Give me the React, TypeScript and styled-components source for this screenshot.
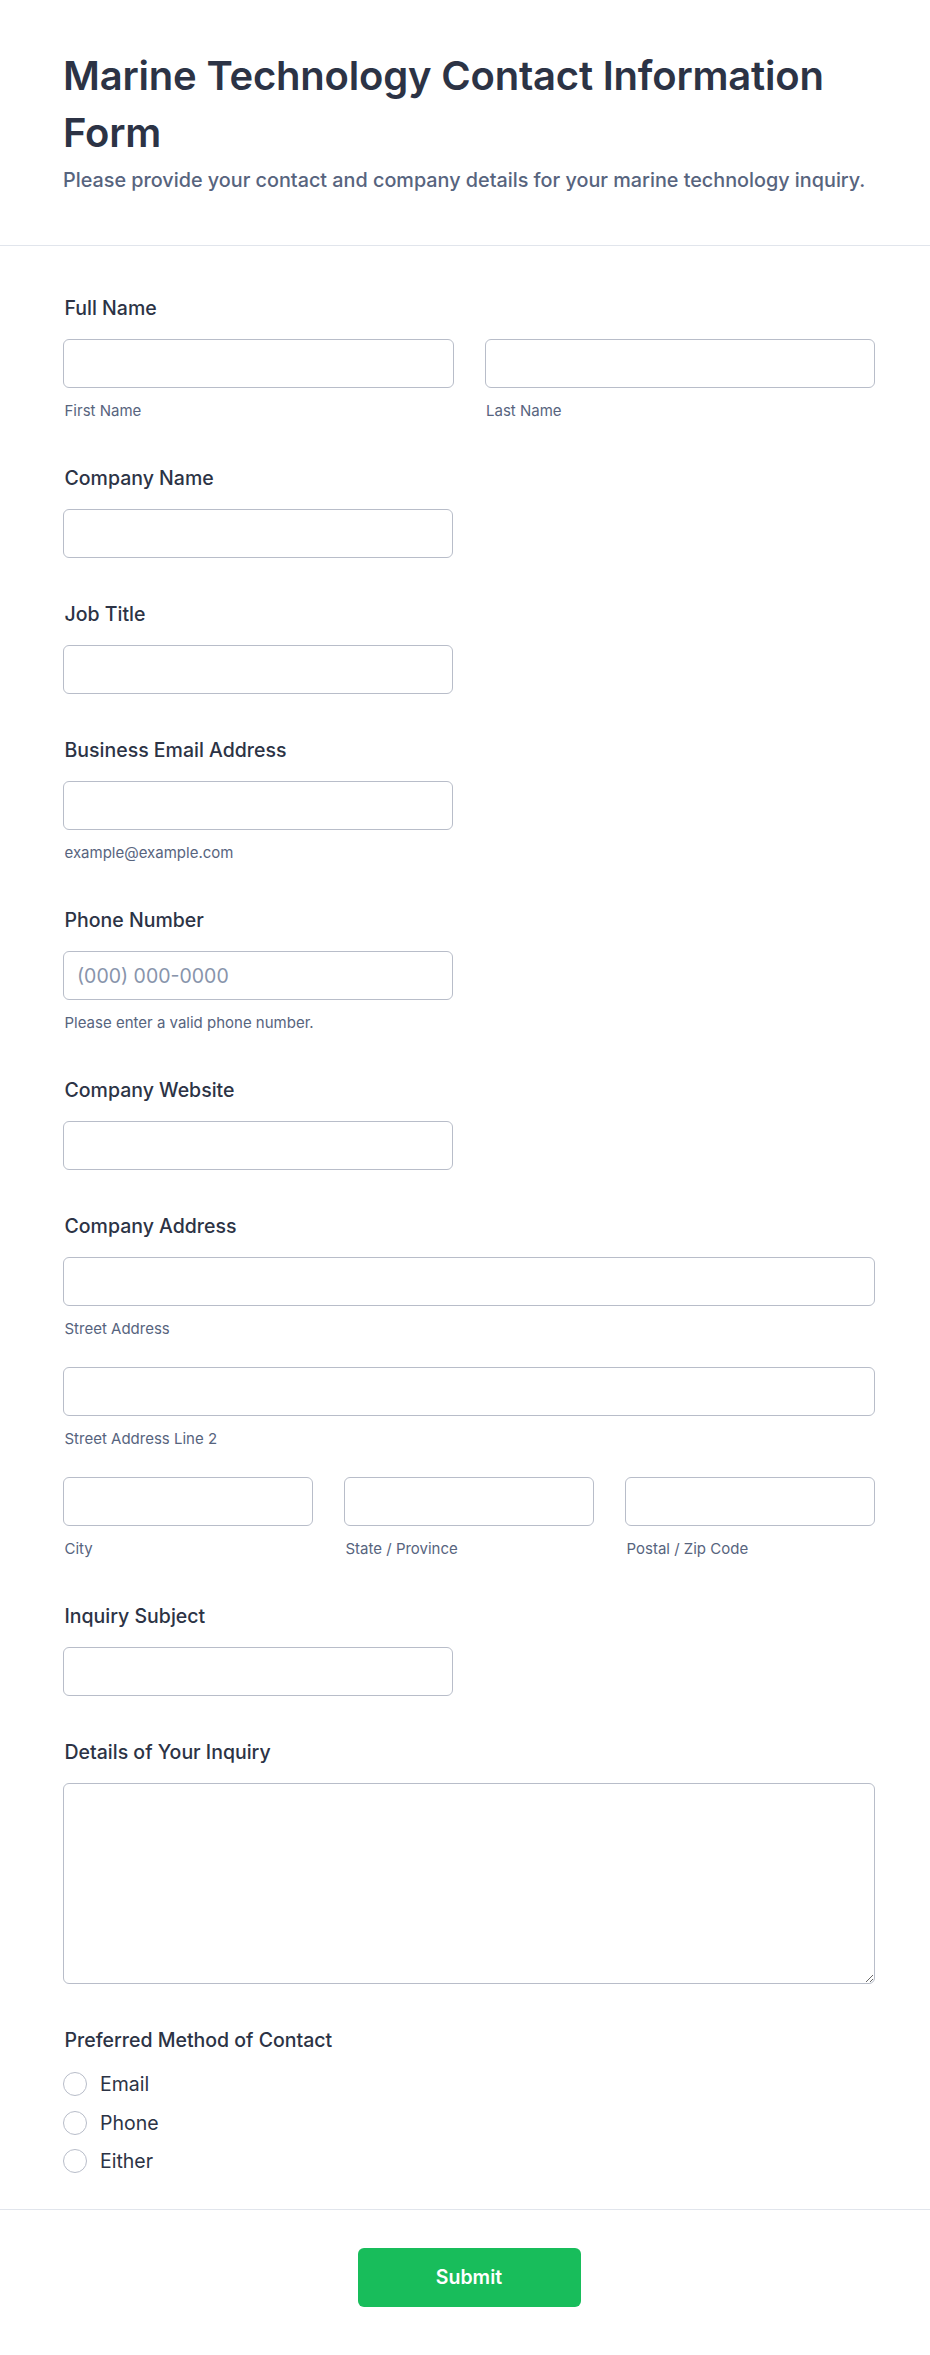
import React from "react";
import styled, { createGlobalStyle } from "styled-components";

const colors = {
  text: "#2c3345",
  muted: "#57647e",
  placeholder: "#8894ab",
  border: "#b8bdc9",
  divider: "#e1e5ec",
  green: "#18bd5b",
};

const GlobalStyle = createGlobalStyle`
  * { box-sizing: border-box; }
  body {
    margin: 0;
    background: #ffffff;
    font-family: Inter, "Noto Sans", "Liberation Sans", sans-serif;
    color: ${colors.text};
  }
`;

type FieldProps = {
  label: string;
  children: React.ReactNode;
};

const Field: React.FC<FieldProps> = ({ label, children }) => (
  <FieldBlock>
    <Label>{label}</Label>
    {children}
  </FieldBlock>
);

type InputBoxProps = {
  sub?: string;
  width?: "half" | "full";
  placeholder?: string;
};

const InputBox: React.FC<InputBoxProps> = ({ sub, width = "full", placeholder }) => (
  <InputWrap $width={width}>
    <TextInput type="text" placeholder={placeholder} />
    {sub && <SubLabel>{sub}</SubLabel>}
  </InputWrap>
);

export default function App() {
  return (
    <Page>
      <GlobalStyle />
      <Header>
        <Inner>
          <Title>Marine Technology Contact Information Form</Title>
          <Subtitle>
            Please provide your contact and company details for your marine technology inquiry.
          </Subtitle>
        </Inner>
      </Header>

      <Body>
        <Inner>
          <Fields>
            <Field label="Full Name">
              <Row $cols={2}>
                <InputBox sub="First Name" />
                <InputBox sub="Last Name" />
              </Row>
            </Field>

            <Field label="Company Name">
              <InputBox width="half" />
            </Field>

            <Field label="Job Title">
              <InputBox width="half" />
            </Field>

            <Field label="Business Email Address">
              <InputBox width="half" sub="example@example.com" />
            </Field>

            <Field label="Phone Number">
              <InputBox
                width="half"
                placeholder="(000) 000-0000"
                sub="Please enter a valid phone number."
              />
            </Field>

            <Field label="Company Website">
              <InputBox width="half" />
            </Field>

            <Field label="Company Address">
              <AddressStack>
                <InputBox sub="Street Address" />
                <InputBox sub="Street Address Line 2" />
                <Row $cols={3}>
                  <InputBox sub="City" />
                  <InputBox sub="State / Province" />
                  <InputBox sub="Postal / Zip Code" />
                </Row>
              </AddressStack>
            </Field>

            <Field label="Inquiry Subject">
              <InputBox width="half" />
            </Field>

            <Field label="Details of Your Inquiry">
              <TextArea />
            </Field>

            <Field label="Preferred Method of Contact">
              <RadioList>
                {["Email", "Phone", "Either"].map((opt) => (
                  <RadioRow key={opt}>
                    <RadioInput type="radio" name="contact" value={opt} />
                    <span>{opt}</span>
                  </RadioRow>
                ))}
              </RadioList>
            </Field>
          </Fields>
        </Inner>
      </Body>

      <Footer>
        <Inner>
          <ButtonRow>
            <SubmitButton type="button">Submit</SubmitButton>
          </ButtonRow>
        </Inner>
      </Footer>
    </Page>
  );
}

const Page = styled.div`
  width: 930px;
  min-height: 2355px;
  background: #ffffff;
`;

const Inner = styled.div`
  width: 812px;
  margin-left: 63px;
`;

const Header = styled.header`
  padding: 47px 0 50px;
  border-bottom: 1.5px solid ${colors.divider};
`;

const Title = styled.h1`
  margin: 0;
  font-size: 40px;
  line-height: 57px;
  font-weight: 600;
  letter-spacing: -0.2px;
  color: ${colors.text};
`;

const Subtitle = styled.p`
  margin: 5px 0 0;
  font-size: 19.8px;
  line-height: 29px;
  font-weight: 500;
  color: ${colors.muted};
`;

const Body = styled.main`
  padding: 48px 0 28px;
`;

const Fields = styled.div`
  display: flex;
  flex-direction: column;
  gap: 42px;
`;

const FieldBlock = styled.div`
  display: flex;
  flex-direction: column;
  gap: 16px;
`;

const Label = styled.label`
  padding-left: 1.5px;
  font-size: 19.5px;
  line-height: 29px;
  font-weight: 500;
  color: ${colors.text};
`;

const Row = styled.div<{ $cols: number }>`
  display: grid;
  grid-template-columns: repeat(${(p) => p.$cols}, 1fr);
  column-gap: 31px;
`;

const AddressStack = styled.div`
  display: flex;
  flex-direction: column;
  gap: 27px;
`;

const InputWrap = styled.div<{ $width: "half" | "full" }>`
  display: flex;
  flex-direction: column;
  gap: 12px;
  width: ${(p) => (p.$width === "half" ? "390px" : "100%")};
`;

const TextInput = styled.input`
  width: 100%;
  height: 49px;
  padding: 0 13px;
  border: 1.5px solid ${colors.border};
  border-radius: 6px;
  background: #ffffff;
  font-family: inherit;
  font-size: 19.5px;
  color: ${colors.text};
  outline: none;

  &::placeholder {
    color: ${colors.placeholder};
  }
`;

const SubLabel = styled.span`
  padding-left: 1.5px;
  font-size: 15px;
  line-height: 22px;
  color: ${colors.muted};
`;

const TextArea = styled.textarea`
  display: block;
  width: 100%;
  height: 201px;
  padding: 12px 13px;
  border: 1.5px solid ${colors.border};
  border-radius: 6px;
  font-family: inherit;
  font-size: 19.5px;
  color: ${colors.text};
  resize: vertical;
  outline: none;
`;

const RadioList = styled.div`
  display: flex;
  flex-direction: column;
  margin-top: -6px;
`;

const RadioRow = styled.label`
  display: flex;
  align-items: center;
  gap: 13px;
  height: 38.5px;
  font-size: 19.5px;
  color: ${colors.text};
`;

const RadioInput = styled.input`
  appearance: none;
  margin: 0;
  width: 24px;
  height: 24px;
  border: 1.5px solid ${colors.border};
  border-radius: 50%;
  background: #ffffff;
  flex-shrink: 0;
`;

const Footer = styled.footer`
  border-top: 1.5px solid ${colors.divider};
  padding: 38px 0 50px;
`;

const ButtonRow = styled.div`
  display: flex;
  justify-content: center;
`;

const SubmitButton = styled.button`
  width: 223px;
  height: 59px;
  border: none;
  border-radius: 6px;
  background: ${colors.green};
  color: #ffffff;
  font-family: inherit;
  font-size: 19.5px;
  font-weight: 600;
  cursor: pointer;
`;
